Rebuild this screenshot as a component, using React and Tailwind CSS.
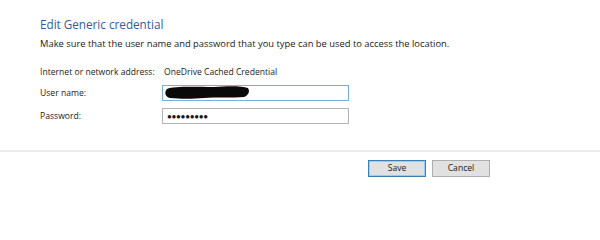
import React from "react";

export default function App() {
  return (
    <div className="w-[600px] h-[227px] bg-white overflow-hidden text-[#1b1b1b]" style={{ fontFamily: '"Open Sans", "Noto Sans", sans-serif' }}>
      <div className="pl-[40px] pt-[15px]">
        <div className="text-[11.7px] leading-[18px] text-[#2f5d9f]">Edit Generic credential</div>
        <div className="mt-[4px] text-[9.4px] leading-[14px]">
          Make sure that the user name and password that you type can be used to access the location.
        </div>
        <div className="mt-[13px] flex items-center h-[16px] text-[8.6px]">
          <div className="w-[124px]">Internet or network address:</div>
          <div>OneDrive Cached Credential</div>
        </div>
        <div className="mt-[5px] flex items-center h-[16px] text-[8.6px]">
          <div className="w-[122px]">User name:</div>
          <div className="relative w-[187px] h-[16px] border border-[#7aaedb] bg-white">
            <svg className="absolute left-[1px] top-[-1px]" width="86" height="16" viewBox="0 0 86 16">
              <path d="M3 4 C10 1, 30 2, 50 2 C65 1, 78 1, 84 3 C86 6, 85 10, 80 12 C70 13, 50 12, 40 13 C30 14, 15 14, 6 13 C1 12, 0 7, 3 4 Z" fill="#0a0a0a" />
            </svg>
          </div>
        </div>
        <div className="mt-[7px] flex items-center h-[16px] text-[8.6px]">
          <div className="w-[122px]">Password:</div>
          <div className="w-[187px] h-[16px] border border-[#b4b4b4] bg-white flex items-center pl-[4px]">
            <span className="text-[8px] tracking-[-0.3px] leading-none">●●●●●●●●●</span>
          </div>
        </div>
      </div>
      <div className="mt-[26px] h-[2px] bg-[#ebebeb]" />
      <div className="mt-[8px] flex pl-[368px] gap-[6px] text-[8.6px]">
        <button className="w-[58px] h-[17px] bg-[#e1e1e1] border border-[#3c7fb1] outline outline-1 outline-[#9ccaf0] -outline-offset-2 flex items-center justify-center">Save</button>
        <button className="w-[58px] h-[17px] bg-[#e1e1e1] border border-[#adadad] flex items-center justify-center">Cancel</button>
      </div>
    </div>
  );
}
